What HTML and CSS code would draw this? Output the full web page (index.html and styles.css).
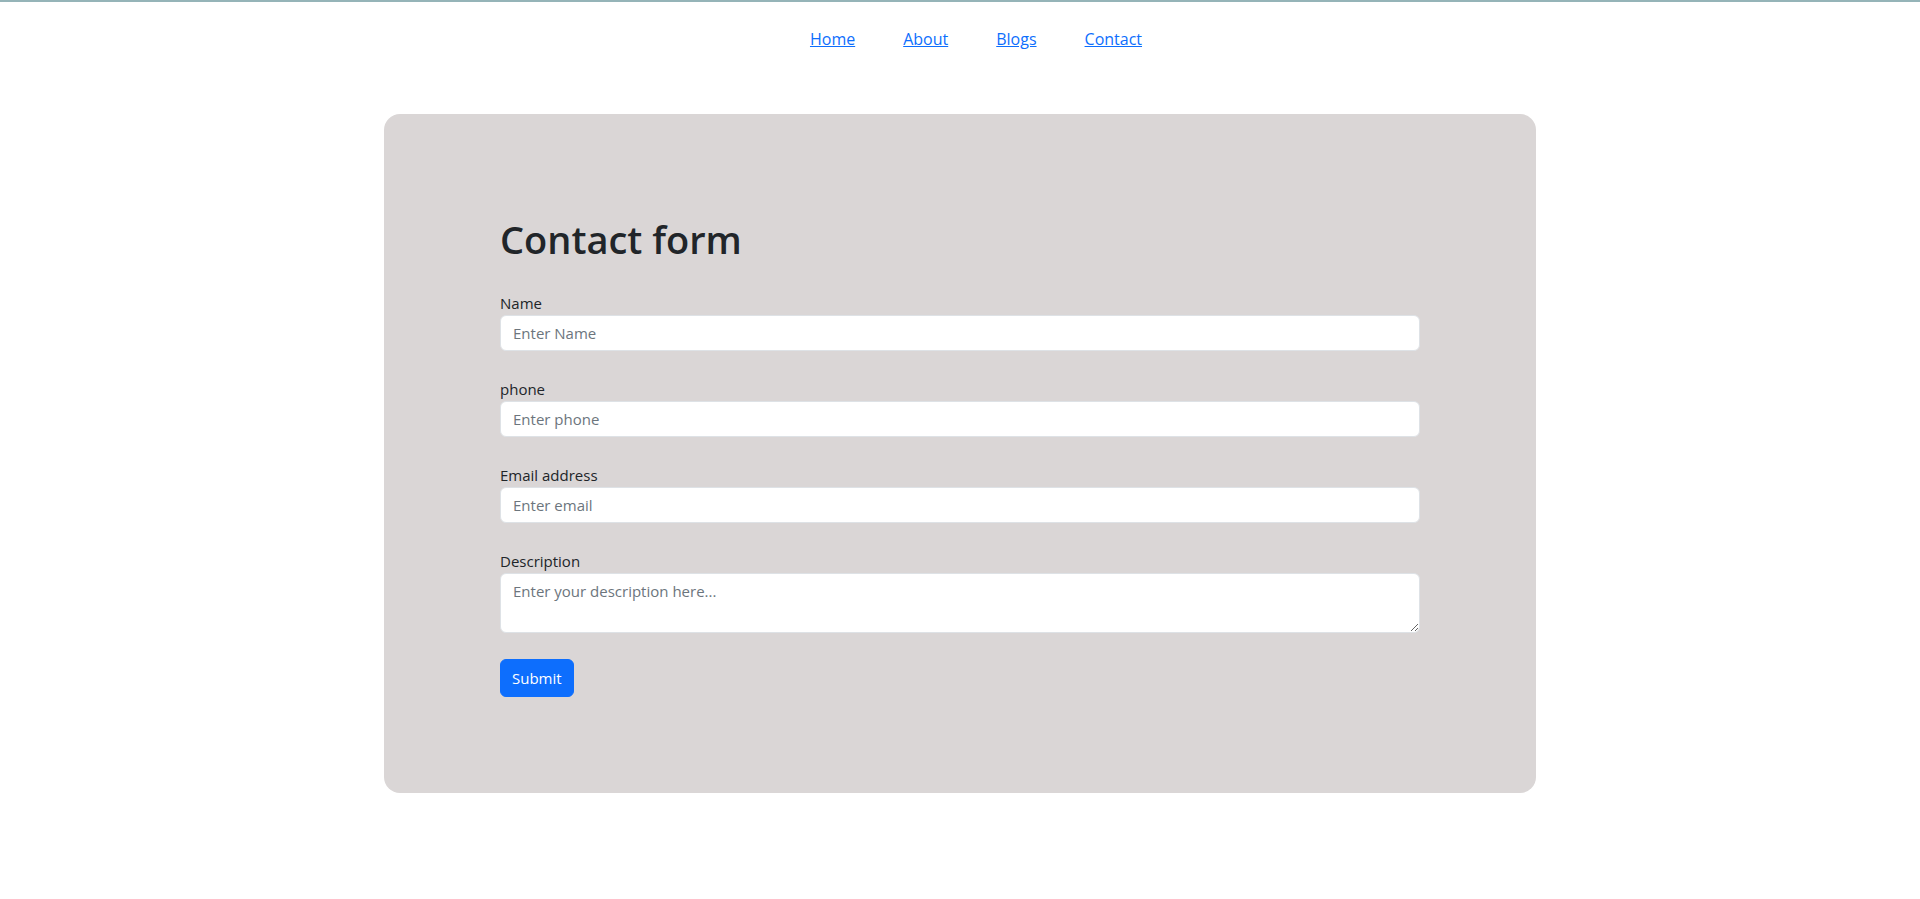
FILE: index.html
```html
<!DOCTYPE html>
<html lang="en">
<head>
<meta charset="utf-8">
<title>Contact</title>
<link rel="stylesheet" href="styles.css">
</head>
<body>
<header class="topbar">
  <nav class="nav">
    <ul class="nav-list">
      <li><a href="#">Home</a></li>
      <li><a href="#">About</a></li>
      <li><a href="#">Blogs</a></li>
      <li><a href="#">Contact</a></li>
    </ul>
  </nav>
</header>
<main class="page">
  <section class="card">
    <form class="contact-form">
      <h1 class="title">Contact form</h1>
      <div class="field">
        <label class="label" for="name">Name</label>
        <input class="control" id="name" type="text" placeholder="Enter Name">
      </div>
      <div class="field">
        <label class="label" for="phone">phone</label>
        <input class="control" id="phone" type="text" placeholder="Enter phone">
      </div>
      <div class="field">
        <label class="label" for="email">Email address</label>
        <input class="control" id="email" type="email" placeholder="Enter email">
      </div>
      <div class="field">
        <label class="label" for="desc">Description</label>
        <textarea class="control textarea" id="desc" rows="2" placeholder="Enter your description here..."></textarea>
      </div>
      <button class="btn" type="button">Submit</button>
    </form>
  </section>
</main>
</body>
</html>
```

FILE: styles.css
```css
* { box-sizing: border-box; }

html, body {
  margin: 0;
  padding: 0;
  background: #ffffff;
}

body {
  font-family: "Open Sans", "Noto Sans", sans-serif;
  font-size: 16px;
  line-height: 24px;
  color: #212529;
}

.topbar {
  border-top: 2px solid #95b4b8;
}

.nav-list {
  list-style: none;
  margin: 0;
  padding: 25px 0 0 32px;
  display: flex;
  justify-content: center;
  gap: 48px;
}

.nav-list a {
  color: #0d6efd;
  text-decoration: underline;
  font-size: 16px;
  font-weight: 500;
  line-height: 24px;
}

.page {
  display: flex;
  justify-content: center;
  padding-top: 63px;
}

.card {
  width: 1152px;
  background: #dad6d6;
  border-radius: 16px;
  padding: 101px 116px 96px;
}

.title {
  margin: 0 0 28px;
  font-size: 38px;
  line-height: 48px;
  font-weight: 600;
  color: #212529;
}

.field {
  margin-bottom: 26px;
}

.label {
  display: block;
  margin: 0;
  font-size: 15px;
  line-height: 24px;
  color: #212529;
}

.control {
  display: block;
  width: 100%;
  height: 36px;
  padding: 5px 12px;
  font-family: inherit;
  font-size: 15px;
  line-height: 24px;
  color: #212529;
  background: #ffffff;
  border: 1px solid #dee2e6;
  border-radius: 6px;
  outline: none;
}

.control::placeholder {
  color: #6c757d;
}

.textarea {
  height: 60px;
  resize: vertical;
}

.btn {
  display: block;
  height: 38px;
  padding: 6px 11px;
  font-family: inherit;
  font-size: 15px;
  line-height: 24px;
  color: #ffffff;
  background: #0d6efd;
  border: 1px solid #0d6efd;
  border-radius: 6px;
}
```
